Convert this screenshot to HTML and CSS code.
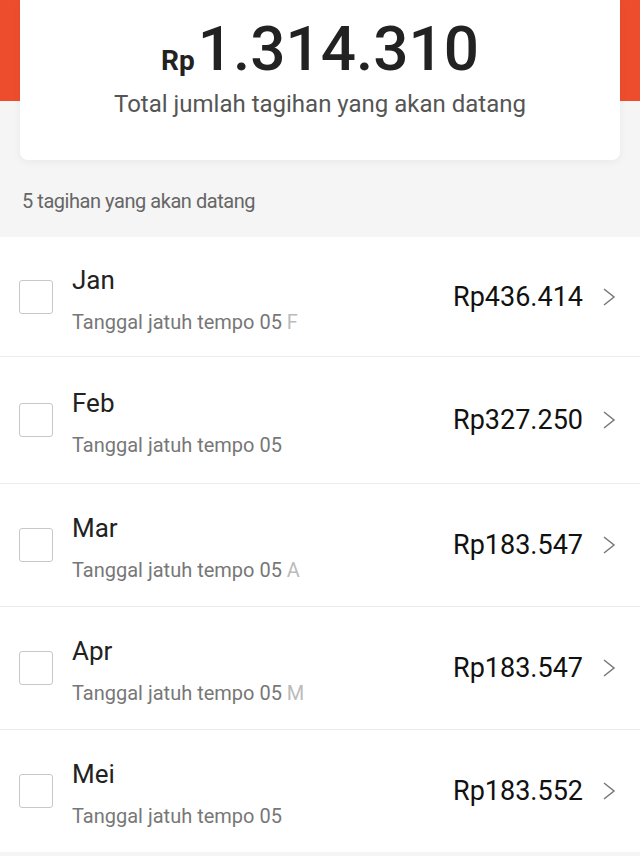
FILE: index.html
```html
<!DOCTYPE html>
<html lang="id">
<head>
<meta charset="utf-8">
<link rel="stylesheet" href="styles.css">
</head>
<body>
<div class="header">
  <div class="card">
    <div class="total"><span class="cur">Rp</span><span class="num">1.314.310</span></div>
    <div class="total-label">Total jumlah tagihan yang akan datang</div>
  </div>
</div>
<div class="section-label">5 tagihan yang akan datang</div>
<div class="list">
  <div class="row first">
    <div class="check"></div>
    <div class="info">
      <div class="month">Jan</div>
      <div class="due">Tanggal jatuh tempo 05 <span class="faint">F</span></div>
    </div>
    <div class="amount">Rp436.414</div>
    <svg class="chev" viewBox="0 0 14 20"><polyline points="2,2 12,10 2,18"/></svg>
  </div>
  <div class="row tall">
    <div class="check"></div>
    <div class="info">
      <div class="month">Feb</div>
      <div class="due">Tanggal jatuh tempo 05</div>
    </div>
    <div class="amount">Rp327.250</div>
    <svg class="chev" viewBox="0 0 14 20"><polyline points="2,2 12,10 2,18"/></svg>
  </div>
  <div class="row">
    <div class="check"></div>
    <div class="info">
      <div class="month">Mar</div>
      <div class="due">Tanggal jatuh tempo 05 <span class="faint">A</span></div>
    </div>
    <div class="amount">Rp183.547</div>
    <svg class="chev" viewBox="0 0 14 20"><polyline points="2,2 12,10 2,18"/></svg>
  </div>
  <div class="row">
    <div class="check"></div>
    <div class="info">
      <div class="month">Apr</div>
      <div class="due">Tanggal jatuh tempo 05 <span class="faint">M</span></div>
    </div>
    <div class="amount">Rp183.547</div>
    <svg class="chev" viewBox="0 0 14 20"><polyline points="2,2 12,10 2,18"/></svg>
  </div>
  <div class="row">
    <div class="check"></div>
    <div class="info">
      <div class="month">Mei</div>
      <div class="due">Tanggal jatuh tempo 05</div>
    </div>
    <div class="amount">Rp183.552</div>
    <svg class="chev" viewBox="0 0 14 20"><polyline points="2,2 12,10 2,18"/></svg>
  </div>
</div>
</body>
</html>
```
FILE: styles.css
```css
* { box-sizing: border-box; }
html, body {
  margin: 0;
  padding: 0;
  background: #f5f5f5;
  font-family: Roboto, "Noto Sans", sans-serif;
  width: 640px;
  height: 856px;
  overflow: hidden;
}
.header {
  background: linear-gradient(#ee4d2d 0, #ee4d2d 101px, #f5f5f5 101px);
  padding: 0 20px;
}
.card {
  background: #fff;
  height: 160px;
  border-radius: 0 0 8px 8px;
  box-shadow: 0 2px 8px rgba(0,0,0,0.05);
  display: flex;
  flex-direction: column;
  align-items: center;
  padding-top: 16px;
}
.total {
  display: flex;
  align-items: baseline;
  color: #222;
  height: 66px;
}
.cur {
  font-size: 28px;
  font-weight: 700;
  margin-right: 3px;
}
.num {
  font-size: 62px;
  font-weight: 500;
  line-height: 66px;
}
.total-label {
  font-size: 24px;
  color: #555;
  margin-top: 8px;
}
.section-label {
  font-size: 20px;
  letter-spacing: -0.45px;
  color: #666;
  padding: 29px 22px 0;
  height: 77px;
}
.list {
  background: #fff;
}
.row {
  display: flex;
  align-items: center;
  height: 123px;
  border-top: 1px solid #ececec;
  padding: 0 24px 0 19px;
}
.row.first {
  border-top: none;
  height: 119px;
}
.row.tall {
  height: 127px;
}
.check {
  width: 34px;
  height: 34px;
  border: 1.5px solid #c8c8c8;
  border-radius: 3px;
  flex: none;
}
.info {
  flex: 1;
  margin-left: 19px;
  display: flex;
  flex-direction: column;
  padding-top: 5px;
}
.month {
  font-size: 26px;
  color: #222;
  line-height: 30px;
}
.due {
  font-size: 20px;
  color: #777;
  margin-top: 15px;
  line-height: 24px;
}
.faint { color: #bbb; }
.amount {
  font-size: 27px;
  color: #111;
}
.chev {
  width: 14px;
  height: 20px;
  margin-left: 19px;
  flex: none;
}
.chev polyline {
  fill: none;
  stroke: #777;
  stroke-width: 1.5;
}
```
